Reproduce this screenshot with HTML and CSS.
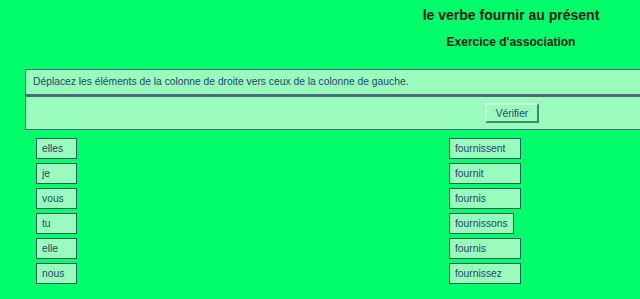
FILE: index.html
```html
<!DOCTYPE html>
<html lang="fr">
<head>
  <meta charset="UTF-8" />
  <title>le verbe fournir au présent</title>
  <link rel="stylesheet" href="styles.css">
</head>
<body>
  <div class="page">
    <h1>le verbe fournir au présent</h1>
    <h2>Exercice d'association</h2>

    <div class="panel">
      <div class="instructions">Déplacez les éléments de la colonne de droite vers ceux de la colonne de gauche.</div>
      <div class="actions">
        <button class="check-btn">Vérifier</button>
      </div>
    </div>

    <div class="columns">
      <div class="col col-left">
        <div class="item">elles</div>
        <div class="item">je</div>
        <div class="item">vous</div>
        <div class="item">tu</div>
        <div class="item">elle</div>
        <div class="item">nous</div>
      </div>
      <div class="col col-right">
        <div class="item wide">fournissent</div>
        <div class="item wide">fournit</div>
        <div class="item wide">fournis</div>
        <div class="item">fournissons</div>
        <div class="item wide">fournis</div>
        <div class="item wide">fournissez</div>
      </div>
    </div>
  </div>
</body>
</html>
```

FILE: styles.css
```css
html, body {
  overflow: hidden;
}
body {
  margin: 0;
  background-color: #00ff6a;
  font-family: "Liberation Sans", Arial, sans-serif;
  color: #23466a;
}
.page {
  width: 1022px;
}
h1 {
  margin: 0;
  padding-top: 7px;
  font-size: 14px;
  line-height: 17px;
  text-align: center;
  color: #0d1a14;
}
h2 {
  margin: 0;
  padding-top: 11px;
  font-size: 12px;
  line-height: 15px;
  text-align: center;
  color: #0d1a14;
}
.panel {
  margin: 19px 0 0 25px;
  width: 982px;
}
.instructions,
.actions {
  background-color: #99fcbd;
  border: 1px solid #4a6a7c;
}
.instructions {
  height: 24px;
  padding-left: 7px;
  font-size: 10.3px;
  line-height: 24px;
}
.actions {
  box-sizing: border-box;
  height: 35px;
  border-top: 2px solid #4a6a7c;
  display: flex;
  align-items: center;
  justify-content: center;
}
.check-btn {
  width: 54px;
  height: 20px;
  margin-right: 8px;
  padding: 0;
  background-color: #99fcbd;
  border: 2px solid;
  border-color: #c8ffe0 #3f8a68 #3f8a68 #c8ffe0;
  font-family: "Liberation Sans", Arial, sans-serif;
  font-size: 10.3px;
  color: #23466a;
}
.columns {
  display: flex;
  margin-top: 8px;
}
.col {
  display: flex;
  flex-direction: column;
  gap: 4px;
  align-items: flex-start;
}
.col-left {
  margin-left: 36px;
  width: 413px;
}
.item {
  box-sizing: border-box;
  height: 21px;
  padding: 0 5px;
  background-color: #99fcbd;
  border: 1px solid #2d5a5a;
  font-size: 10.3px;
  line-height: 19px;
}
.col-left .item {
  width: 41px;
}
.item.wide {
  width: 72px;
}
```
